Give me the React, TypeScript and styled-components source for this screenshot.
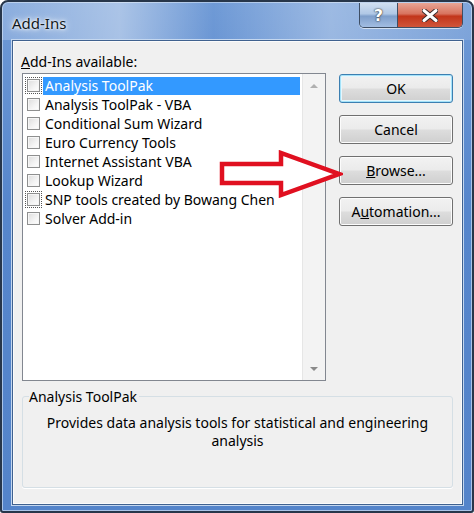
import styled, { createGlobalStyle } from 'styled-components';

const GlobalStyle = createGlobalStyle`
  html, body {
    margin: 0;
    padding: 0;
    background: #ffffff;
  }
  body {
    font-family: "Noto Sans", "DejaVu Sans", sans-serif;
  }
`;

const Window = styled.div`
  position: relative;
  width: 474px;
  height: 513px;
  box-sizing: border-box;
  display: flex;
  flex-direction: column;
  border: 2px solid #27364a;
  border-radius: 8px 8px 3px 3px;
  background: linear-gradient(180deg, #6f9ad6 0%, #5686cc 40%, #5484ca 100%);
  box-shadow: inset 0 0 0 1px #a9c4e8;
  overflow: hidden;
`;

const TitleBar = styled.div`
  height: 38px;
  display: flex;
  align-items: flex-start;
  justify-content: space-between;
  padding: 0 9px 0 10px;
  background: linear-gradient(90deg, rgba(255, 255, 255, 0.2) 0%, rgba(255, 255, 255, 0.42) 25%, rgba(255, 255, 255, 0) 45%, rgba(255, 255, 255, 0.32) 70%, rgba(255, 255, 255, 0.12) 100%);
`;

const Title = styled.div`
  font-size: 15px;
  color: #101820;
  padding-top: 11px;
  text-shadow: 0 0 8px #ffffff, 0 0 4px #ffffff, 0 0 2px #ffffff;
`;

const Caption = styled.div`
  display: flex;
  margin-top: 1px;
  border: 1px solid #3e4e64;
  border-top: none;
  border-radius: 0 0 5px 5px;
  overflow: hidden;
  box-shadow: 0 1px 0 rgba(255, 255, 255, 0.6);
`;

const CaptionButton = styled.div<{ $close?: boolean }>`
  width: ${p => (p.$close ? '64px' : '37px')};
  height: 24px;
  display: flex;
  align-items: center;
  justify-content: center;
  color: #ffffff;
  font-weight: 700;
  font-size: 16px;
  font-family: "DejaVu Sans", sans-serif;
  text-shadow: 0 0 2px #303030, 0 0 1px #303030;
  background: ${p =>
    p.$close
      ? 'linear-gradient(180deg, #e8a595 0%, #d8735f 45%, #c2351b 55%, #d0553a 100%)'
      : 'linear-gradient(180deg, #d0dff1 0%, #b0c8e6 45%, #7f9fcb 55%, #a2bde2 100%)'};
  border-left: ${p => (p.$close ? '1px solid #3e4e64' : 'none')};
`;

const Client = styled.div`
  position: relative;
  flex: 1;
  margin: 0 9px 6px 10px;
  background: #f0f0f0;
  border: 1px solid #3f618f;
  box-shadow: 0 0 0 1px #c4d7ef, inset 0 0 0 1px #fbfbfb;
  padding: 12px 9px 13px 8px;
  display: flex;
  flex-direction: column;
`;

const Top = styled.div`
  display: flex;
  gap: 13px;
`;

const LeftColumn = styled.div`
  display: flex;
  flex-direction: column;
`;

const Label = styled.div`
  font-size: 14px;
  color: #000;
  height: 20px;
  line-height: 17px;
`;

const Underline = styled.span`
  text-decoration: underline;
`;

const ListBox = styled.div`
  margin-left: 1px;
  width: 304px;
  height: 308px;
  box-sizing: border-box;
  border: 1px solid #828790;
  background: #ffffff;
  display: flex;
`;

const Items = styled.div`
  flex: 1;
  padding: 2px 0 0 3px;
`;

const Row = styled.div`
  display: flex;
  align-items: center;
  height: 19px;
  gap: 3px;
`;

const Check = styled.div<{ $focus?: boolean }>`
  width: 13px;
  height: 13px;
  box-sizing: border-box;
  border: 1px solid #8e8f8f;
  background: linear-gradient(135deg, #dcdcdc 0%, #f4f4f4 60%, #ffffff 100%);
  box-shadow: inset 0 0 0 1px #f6f6f6;
  margin-left: 1px;
  outline: ${p => (p.$focus ? '1px dotted #555' : 'none')};
  outline-offset: 1px;
`;

const ItemText = styled.div<{ $selected?: boolean }>`
  flex: 1;
  height: 18px;
  line-height: 18px;
  font-size: 14px;
  padding-left: 2px;
  color: ${p => (p.$selected ? '#ffffff' : '#000000')};
  background: ${p => (p.$selected ? '#3399ff' : 'transparent')};
  white-space: nowrap;
  overflow: hidden;
`;

const ScrollBar = styled.div`
  width: 22px;
  margin-left: 2px;
  background: #f3f3f3;
  border-left: 1px solid #e6e6e6;
  display: flex;
  flex-direction: column;
  justify-content: space-between;
  align-items: center;
  padding: 10px 0 9px;
`;

const ArrowGlyph = styled.div<{ $down?: boolean }>`
  width: 0;
  height: 0;
  border-left: 4px solid transparent;
  border-right: 4px solid transparent;
  ${p => (p.$down ? 'border-top: 4px solid #8a8a8a;' : 'border-bottom: 4px solid #b0b0b0;')}
`;

const Buttons = styled.div`
  display: flex;
  flex-direction: column;
  gap: 12px;
  padding-top: 21px;
`;

const Button = styled.div<{ $default?: boolean }>`
  width: 114px;
  height: 29px;
  box-sizing: border-box;
  display: flex;
  align-items: center;
  justify-content: center;
  font-size: 14px;
  color: #000;
  border-radius: 3px;
  border: 1px solid ${p => (p.$default ? '#3c7fb1' : '#707070')};
  background: linear-gradient(180deg, #f2f2f2 0%, #ebebeb 48%, #dddddd 52%, #cfcfcf 100%);
  box-shadow: ${p =>
    p.$default ? 'inset 0 0 0 1px #a4e2f9, inset 0 0 0 2px #e6f6fc' : 'inset 0 0 0 1px #fcfcfc'};
`;

const Group = styled.fieldset`
  margin: 6px 0 0 1px;
  padding: 0 8px 0;
  height: 101px;
  box-sizing: border-box;
  border: 1px solid #d5dfe5;
  border-radius: 3px;
  box-shadow: 0 1px 0 #ffffff;
`;

const Legend = styled.legend`
  font-size: 14px;
  padding: 0 2px 0 0;
  margin-left: -2px;
  color: #000;
`;

const Description = styled.div`
  text-align: center;
  font-size: 14px;
  line-height: 18px;
  color: #000;
  padding-top: 8px;
`;

const RedArrow = styled.svg`
  position: absolute;
  left: 204px;
  top: 109px;
`;

const items = [
  'Analysis ToolPak',
  'Analysis ToolPak - VBA',
  'Conditional Sum Wizard',
  'Euro Currency Tools',
  'Internet Assistant VBA',
  'Lookup Wizard',
  'SNP tools created by Bowang Chen',
  'Solver Add-in',
];

export default function App() {
  return (
    <>
      <GlobalStyle />
      <Window>
        <TitleBar>
          <Title>Add-Ins</Title>
          <Caption>
            <CaptionButton>?</CaptionButton>
            <CaptionButton $close>
              <svg width="16" height="13" viewBox="0 0 16 13">
                <path
                  d="M2 1.5 L14 11.5 M14 1.5 L2 11.5"
                  stroke="#3a2a2a"
                  strokeWidth="5"
                  strokeLinecap="round"
                />
                <path
                  d="M2 1.5 L14 11.5 M14 1.5 L2 11.5"
                  stroke="#ffffff"
                  strokeWidth="3"
                  strokeLinecap="round"
                />
              </svg>
            </CaptionButton>
          </Caption>
        </TitleBar>
        <Client>
          <Top>
            <LeftColumn>
              <Label>
                <Underline>A</Underline>dd-Ins available:
              </Label>
              <ListBox>
                <Items>
                  {items.map((name, i) => (
                    <Row key={name}>
                      <Check $focus={i === 0 || i === 6} />
                      <ItemText $selected={i === 0}>{name}</ItemText>
                    </Row>
                  ))}
                </Items>
                <ScrollBar>
                  <ArrowGlyph />
                  <ArrowGlyph $down />
                </ScrollBar>
              </ListBox>
            </LeftColumn>
            <Buttons>
              <Button $default>OK</Button>
              <Button>Cancel</Button>
              <Button>
                <Underline>B</Underline>rowse...
              </Button>
              <Button>
                A<Underline>u</Underline>tomation...
              </Button>
            </Buttons>
          </Top>
          <Group>
            <Legend>Analysis ToolPak</Legend>
            <Description>
              Provides data analysis tools for statistical and engineering
              <br />
              analysis
            </Description>
          </Group>
          <RedArrow width="126" height="48" viewBox="0 0 126 48">
            <path
              d="M5 14 L64 14 L64 3 L122 24 L64 45 L64 33 L5 33 Z"
              fill="#ffffff"
              stroke="#e01020"
              strokeWidth="4.5"
              strokeLinejoin="miter"
            />
          </RedArrow>
        </Client>
      </Window>
    </>
  );
}
